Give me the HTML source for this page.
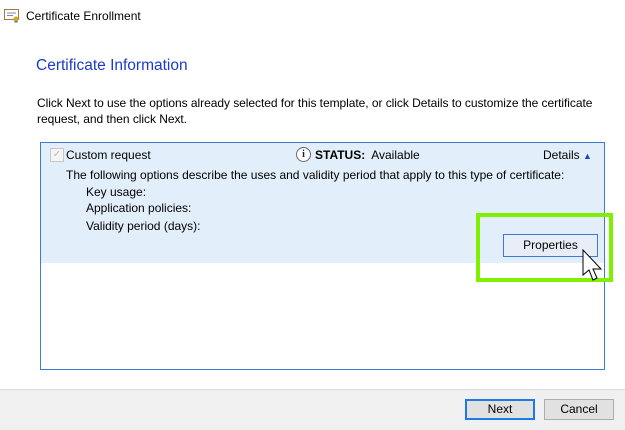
<html><head><style>
body{margin:0;width:625px;height:429px;background:#fff;font-family:"Liberation Sans",sans-serif;font-size:12px;color:#000;position:relative;overflow:hidden}
.a{position:absolute;white-space:nowrap}
</style></head><body>
<svg class="a" style="left:4px;top:9px" width="16" height="14" viewBox="0 0 16 14"><rect x="0.5" y="0.5" width="14" height="10" fill="#fff" stroke="#a07a40"/><line x1="3" y1="4" x2="12" y2="4" stroke="#7a8db0"/><line x1="3" y1="6.5" x2="9" y2="6.5" stroke="#7a8db0"/><circle cx="12" cy="10" r="2.5" fill="#e0a020"/><path d="M10.5 12 L10.5 14 L12 13 L13.5 14 L13.5 12" fill="#3070c0"/></svg>
<div class="a" style="left:26px;top:9px">Certificate Enrollment</div>
<div class="a" style="left:36px;top:57px;font-size:15.5px;color:#1a3cc8">Certificate Information</div>
<div class="a" style="left:37px;top:95px;line-height:16px;letter-spacing:-0.05px">Click Next to use the options already selected for this template, or click Details to customize the certificate<br>request, and then click Next.</div>
<div class="a" style="left:40px;top:142px;width:563px;height:226px;border:1px solid #3c7ad8"></div>
<div class="a" style="left:41px;top:143px;width:563px;height:120px;background:#e3eefb"></div>
<div class="a" style="left:50px;top:148px;width:12px;height:12px;border:1px solid #c8c8c8;background:#f4f4f4;color:#bbb;font-size:10px;line-height:12px;text-align:center">✓</div>
<div class="a" style="left:66px;top:148px">Custom request</div>
<div class="a" style="left:296px;top:147px;width:13px;height:13px;border-radius:50%;border:1px solid #666;background:#fff;font:bold 10px 'Liberation Serif',serif;text-align:center;line-height:13px;color:#123">i</div>
<div class="a" style="left:315px;top:148px"><b>STATUS:</b>&nbsp; Available</div>
<div class="a" style="left:543px;top:148px">Details <span style="color:#1a4cb8;font-size:9px">▲</span></div>
<div class="a" style="left:66px;top:168px">The following options describe the uses and validity period that apply to this type of certificate:</div>
<div class="a" style="left:86px;top:185px">Key usage:</div>
<div class="a" style="left:86px;top:201px">Application policies:</div>
<div class="a" style="left:86px;top:219px">Validity period (days):</div>
<div class="a" style="left:503px;top:234px;width:93px;height:21px;border:1px solid #3c7ad8;background:#e8eef8;text-align:center;line-height:21px">Properties</div>
<div class="a" style="left:476px;top:213px;width:129px;height:61px;border:4px solid #7ef000"></div>
<svg class="a" style="left:582px;top:249px" width="26" height="40" viewBox="0 0 26 40"><path d="M1 1 L1 26 L7 21 L11 31 L15 29 L11 20 L19 20 Z" fill="#fff" stroke="#000"/></svg>
<div class="a" style="left:0;top:389px;width:625px;height:40px;background:#f0f0f0;border-top:1px solid #dcdcdc"></div>
<div class="a" style="left:465px;top:399px;width:66px;height:17px;border:2px solid #1e78e6;background:#e1e1e1;text-align:center;line-height:17px">Next</div>
<div class="a" style="left:544px;top:399px;width:68px;height:19px;border:1px solid #adadad;background:#e1e1e1;text-align:center;line-height:19px">Cancel</div>
</body></html>
